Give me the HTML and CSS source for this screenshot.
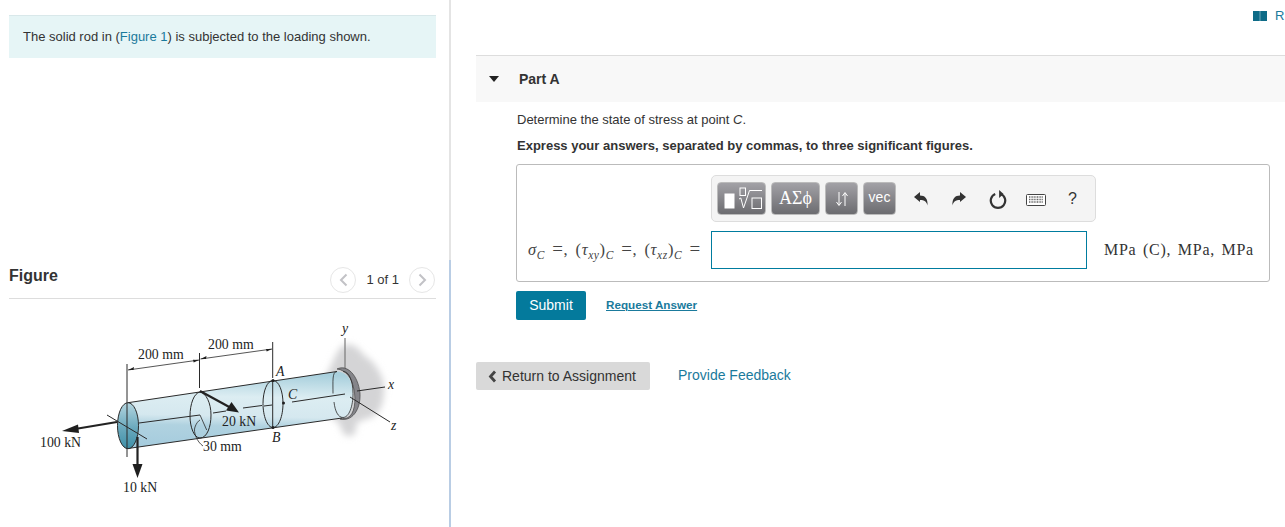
FILE: index.html
```html
<!DOCTYPE html>
<html lang="en">
<head>
<meta charset="utf-8">
<title>Part A</title>
<link rel="stylesheet" href="styles.css">
</head>
<body>
<div class="page">
  <aside class="left">
    <div class="intro">The solid rod in (<a class="link" href="#">Figure 1</a>) is subjected to the loading shown.</div>
    <div class="fig-head">
      <h2 class="fig-title">Figure</h2>
      <div class="pager">
        <span class="circle"><svg width="9" height="14" viewBox="0 0 9 14"><path d="M7.5 1.5 2 7l5.5 5.5" class="chev"/></svg></span>
        <span class="pager-text">1 of 1</span>
        <span class="circle"><svg width="9" height="14" viewBox="0 0 9 14"><path d="M1.5 1.5 7 7l-5.5 5.5" class="chev"/></svg></span>
      </div>
    </div>
    <svg class="diagram" width="440" height="217" viewBox="0 310 440 217">
      <defs>
        <linearGradient id="rod" x1="0.03" y1="0" x2="-0.03" y2="1">
          <stop offset="0" stop-color="#a9d0dd"/>
          <stop offset=".3" stop-color="#dcedf2"/>
          <stop offset=".55" stop-color="#d5e8ef"/>
          <stop offset=".68" stop-color="#b0d2e0"/>
          <stop offset="1" stop-color="#a4cbdd"/>
        </linearGradient>
        <linearGradient id="cap" x1="0" y1="0" x2="0" y2="1">
          <stop offset="0" stop-color="#b5d6e0"/>
          <stop offset=".55" stop-color="#6aa9bd"/>
          <stop offset="1" stop-color="#3f90a8"/>
        </linearGradient>
        <filter id="blur" x="-20%" y="-20%" width="140%" height="140%"><feGaussianBlur stdDeviation="3.5"/></filter>
      </defs>
      <path d="M345 345c8-2 13 3 18 9 4 5 8 5 11 10 5 7 10 14 10 25 0 12-3 22-10 27-5 3-12 3-17 7-3 3 2 12-7 13-7 1-8-6-10-11-2-5-11-8-16-13-6-5-8-9-7-17 1-7 5-14 10-21 6-10 10-27 18-29z" class="wall" filter="url(#blur)"/>
      <line x1="345" y1="338" x2="345" y2="372" class="axis-gray"/>
      <path d="M337 369c10-5 21 6 23 24 1 18-9 29-20 26l7-1c8-3 9-18 7-28-2-12-8-20-17-21z" class="ring"/>
      <path d="M128 402.700 337 371.500C350 372 353 385 353 395 353 410 349 418 342 418L128 448.500z" fill="url(#rod)"/>
      <path d="M128 402.700 337 371.500M128 448.500 342 418" class="ln"/>
      <ellipse cx="128" cy="425.700" rx="10.500" ry="23" fill="url(#cap)" class="ln"/>
      <path d="M337 371.500c-5 0-4 10-4 22M334 402c1 9 4 15.500 9 15.500 6 0 10-11 10-24 0-13-4-22-10-22" class="ln-thin"/>
      <path d="M200 392c-6 1-10 12-10 24 0 11 4 22 10 22 7 0 11-11 11-23 0-12-5-22-11-23z" class="ln"/>
      <path d="M273 380.500c-6 0-10 11-10 23 0 12 4 24 10 24 6 0 10-12 10-24 0-12-4-23-10-23z" class="ln"/>
      <path d="M127 364V457M199.500 353V388M272.700 342V378M272.700 381V428" class="ln"/>
      <path d="M128 370 199 360M200.500 359 272 349" class="ln-thin"/>
      <path d="M128 370l6-3-.5 3zM199 360l-6-.2.7 2.600zM200.500 359l6-3-.5 3zM272 349l-6 0 .7 2.600z" class="fill"/>
      <path d="M139 423 200 415M213 413 226 411M243 408 262 405.500M264 406 272 405M292 402 345 394" class="ln"/>
      <path d="M357 391 385 387" class="ln"/>
      <path d="M350 397 390 422" class="ln"/>
      <path d="M107 415 147 439" class="ln"/>
      <path d="M200 415l6.700 15M203 446c-6-4-10-14-8-19 1-3 3-6 5-7" class="ln-thin"/>
      <path d="M200 391 232 408.500" class="ln-thick"/>
      <path d="M239 412.500 226 410.500 231.500 402z" class="fill"/>
      <path d="M117 422 72 429.500" class="ln-thick"/>
      <path d="M62 431 78 424.500 79 433z" class="fill"/>
      <path d="M137.500 437V468" class="ln-thick"/>
      <path d="M137.500 478 132.500 464H142.500z" class="fill"/>
      <circle cx="283.500" cy="403" r="1.500" class="fill"/>
      <circle cx="273" cy="380.500" r="1.500" class="fill"/>
      <circle cx="273" cy="427.500" r="1.500" class="fill"/>
      <text x="40" y="447" class="lbl">100 kN</text>
      <text x="123" y="492" class="lbl">10 kN</text>
      <text x="138" y="359" class="lbl">200 mm</text>
      <text x="208" y="349" class="lbl">200 mm</text>
      <text x="222" y="426" class="lbl">20 kN</text>
      <text x="203" y="451" class="lbl">30 mm</text>
      <text x="276" y="376" class="lbl it">A</text>
      <text x="272" y="442" class="lbl it">B</text>
      <text x="288" y="399" class="lbl it">C</text>
      <text x="342" y="333" class="lbl it">y</text>
      <text x="388" y="389" class="lbl it">x</text>
      <text x="391" y="430" class="lbl it">z</text>
    </svg>
  </aside>
  <div class="divider"></div>
  <main class="right">
    <div class="topbar">
      <svg class="book" width="14" height="10" viewBox="0 0 14 10"><path d="M0 0h14v10H0z"/><path d="M7 0v10" class="book-gap"/></svg>
      <span class="review">R</span>
    </div>
    <div class="part-head">
      <span class="tri"></span>
      <span class="part-title">Part A</span>
    </div>
    <div class="part-body">
      <p class="q">Determine the state of stress at point <i>C</i>.</p>
      <p class="q q-bold">Express your answers, separated by commas, to three significant figures.</p>
      <div class="answer">
        <div class="toolbar">
          <span class="tb-btn tb-tmpl">
            <svg width="44" height="26" viewBox="0 0 44 26"><rect x="4.500" y="7.500" width="10" height="15" fill="#fff"/><rect x="20" y="2" width="5.500" height="7.500" class="hollow"/><path d="M19 13l1.800-1 2.700 10 6-17.500H42" class="hollow"/><rect x="32" y="12" width="9.500" height="10.500" class="hollow"/></svg>
          </span>
          <span class="tb-btn tb-greek">ΑΣϕ</span>
          <span class="tb-btn tb-arrows">
            <svg width="16" height="16" viewBox="0 0 16 16"><path d="M5 1v13M2.500 11 5 14.500 7.500 11M11 15V2M8.500 5 11 1.500 13.500 5" class="hollow"/></svg>
          </span>
          <span class="tb-btn tb-vec">vec</span>
          <span class="tb-tools">
            <svg width="16" height="16" viewBox="0 0 16 16"><path d="M1 6 7 1v3.500c5 0 8 3 7.500 10-1-4-3-5.500-7.500-5.500V11z" class="dark"/></svg>
            <svg width="16" height="16" viewBox="0 0 16 16"><path d="M15 6 9 1v3.500c-5 0-8 3-7.500 10 1-4 3-5.500 7.500-5.500V11z" class="dark"/></svg>
            <svg width="18" height="20" viewBox="0 0 16 18"><path d="M10.500 4.500a6.500 6.500 0 1 1-5 0" class="reset"/><path d="M9 1v7l4-3.500z" class="dark"/></svg>
            <svg class="kbd" width="20" height="12" viewBox="0 0 20 12"><rect x=".5" y=".5" width="19" height="11" rx="1" class="key"/><path d="M3 3h14M3 5.500h14M3 8h14" class="keyrows"/></svg>
            <span class="help">?</span>
          </span>
        </div>
        <div class="answer-row">
          <span class="math"><i>σ</i><sub><i>C</i></sub> <span class="eq">=</span>, (<i>τ</i><sub><i>xy</i></sub>)<sub><i>C</i></sub> <span class="eq">=</span>, (<i>τ</i><sub><i>xz</i></sub>)<sub><i>C</i></sub> <span class="eq">=</span></span>
          <input class="field" type="text" aria-label="answer">
          <span class="units">MPa (C), MPa, MPa</span>
        </div>
      </div>
      <div class="actions">
        <button class="submit" type="button">Submit</button>
        <a class="request" href="#">Request Answer</a>
      </div>
    </div>
    <div class="footer">
      <a class="return" href="#"><svg width="9" height="13" viewBox="0 0 9 13"><path d="M7 1.500 2.500 6.500 7 11.500" class="ret-chev"/></svg>Return to Assignment</a>
      <a class="feedback link" href="#">Provide Feedback</a>
    </div>
  </main>
</div>
</body>
</html>
```
FILE: styles.css
```css
* { box-sizing: border-box; }
html, body { margin: 0; padding: 0; height: 100%; overflow: hidden; background: #fff; }
body { font-family: "Liberation Sans", Arial, sans-serif; color: #333; font-size: 13px; }
.page { display: flex; width: 1285px; height: 527px; overflow: hidden; }

.left { width: 449px; flex: none; padding: 15px 13px 0 9px; }
.link { color: #1a7a9c; text-decoration: none; }
.intro { height: 43px; background: #e6f5f6; border-top: 1px solid #d9e8ea; padding: 13px 14px 0; font-size: 13px; line-height: 15px; white-space: nowrap; }
.fig-head { display: flex; align-items: center; justify-content: space-between; margin-top: 205px; height: 36px; padding-bottom: 4px; border-bottom: 1px solid #ddd; }
.fig-title { margin: 0 0 6px; font-size: 16px; font-weight: 700; color: #333; }
.pager { display: flex; align-items: center; gap: 10px; font-size: 13px; margin-top: 2px; padding-right: 1px; }
.circle { width: 26px; height: 26px; border: 1.5px solid #e6e6e6; border-radius: 50%; display: flex; align-items: center; justify-content: center; }
.chev { fill: none; stroke: #c2c2c6; stroke-width: 2; }
.pager-text { color: #333; }
.diagram { display: block; margin: 11px 0 0 -9px; }
.wall { fill: #d4d4d6; }
.axis-gray { stroke: #7a7a7a; stroke-width: 1.2; }
.ring { fill: #85858a; stroke: #333; stroke-width: .6; }
.ln { fill: none; stroke: #2a2a2a; stroke-width: 1; }
.diagram ellipse.ln { fill: url(#cap); }
.ln-thin { fill: none; stroke: #2a2a2a; stroke-width: .8; }
.ln-thick { fill: none; stroke: #222; stroke-width: 2.2; }
.fill { fill: #1f1f1f; }
.lbl { font-family: "Liberation Serif", "Times New Roman", serif; font-size: 13.8px; fill: #222; }
.it { font-style: italic; }

.divider { width: 2px; flex: none; background: linear-gradient(#e4e4e4 260px, #b9cde4 260px); }

.right { flex: none; width: 834px; padding-left: 25px; overflow: hidden; }
.topbar { height: 55px; display: flex; align-items: flex-start; padding: 8px 0 0 777px; white-space: nowrap; }
.book { margin-top: 3px; fill: #0e6b87; flex: none; }
.book-gap { stroke: #6fa8ba; stroke-width: 1; }
.review { margin-left: 8px; color: #1a7a9c; font-size: 13px; }
.part-head { height: 47px; background: #f8f8f8; border-top: 1px solid #ddd; display: flex; align-items: center; padding-left: 13px; }
.tri { width: 0; height: 0; border-left: 5.5px solid transparent; border-right: 5.5px solid transparent; border-top: 6px solid #222; }
.part-title { margin-left: 20px; font-weight: 700; font-size: 14px; }
.part-body { padding: 10px 15px 0 40px; }
.q { margin: 0 0 10px; padding-left: 1px; font-size: 13px; line-height: 16px; }
.q-bold { font-weight: 700; margin-bottom: 10px; }
.answer { height: 118px; width: 754px; border: 1px solid #bbb; border-radius: 3px; padding: 10px 0 0; }
.toolbar { display: flex; align-items: center; width: 385px; height: 47px; margin-left: 194px; background: #f4f4f4; border: 1px solid #ddd; border-radius: 5px; padding: 0 0 0 5px; gap: 5px; }
.tb-btn { height: 33px; display: flex; align-items: center; justify-content: center; color: #fff; border-radius: 4px; border: 1px solid #bbb; background: linear-gradient(#a2a1a6, #6c6c70); }
.tb-tmpl { width: 49px; }
.tb-greek { width: 49px; font-family: "Liberation Serif", serif; font-size: 18px; }
.tb-arrows { width: 33px; }
.tb-vec { width: 33px; font-size: 14px; padding-bottom: 4px; }
.hollow { fill: none; stroke: #fff; stroke-width: 1; }
.tb-tools { display: flex; align-items: center; justify-content: space-between; width: 164px; margin-left: 12px; }
.dark { fill: #333; }
.reset { fill: none; stroke: #333; stroke-width: 2; }
.kbd { margin-left: -3px; margin-top: 3px; }
.key { fill: #fff; stroke: #444; }
.keyrows { stroke: #666; stroke-width: 1.400; stroke-dasharray: 1 .6; }
.help { font-size: 16px; color: #333; }
.answer-row { display: flex; align-items: center; margin-top: 9px; }
.math { width: 194px; padding-left: 11px; font-family: "Liberation Serif", serif; font-size: 16.5px; color: #444; white-space: nowrap; letter-spacing: .6px; word-spacing: 2.5px; }
.math sub { font-size: 11.5px; line-height: 0; }
.eq { font-size: 19px; line-height: 0; }
.field { width: 376px; height: 38px; border: 1.5px solid #007c9f; background: #fff; outline: none; padding: 0; border-radius: 0; }
.units { margin-left: 17px; font-family: "Liberation Serif", serif; font-size: 16px; letter-spacing: .7px; word-spacing: 2px; color: #333; white-space: nowrap; }
.actions { display: flex; align-items: center; margin-top: 9px; gap: 20px; }
.submit { width: 70px; height: 29px; border: 0; border-radius: 2px; background: #047a9c; color: #fff; font-family: inherit; font-size: 14px; line-height: 28px; padding: 0 0 1px; }
.request { color: #1a7a9c; font-weight: 700; font-size: 11.7px; margin-top: -2px; }
.footer { display: flex; align-items: center; margin-top: 42px; gap: 28px; }
.return { display: flex; align-items: center; gap: 5px; width: 174px; height: 28px; padding-left: 12px; background: #d9d9d9; border-radius: 2px; color: #333; text-decoration: none; font-size: 14px; }
.ret-chev { fill: none; stroke: #444; stroke-width: 2.800; }
.feedback { font-size: 14px; margin-top: -2px; }
```
